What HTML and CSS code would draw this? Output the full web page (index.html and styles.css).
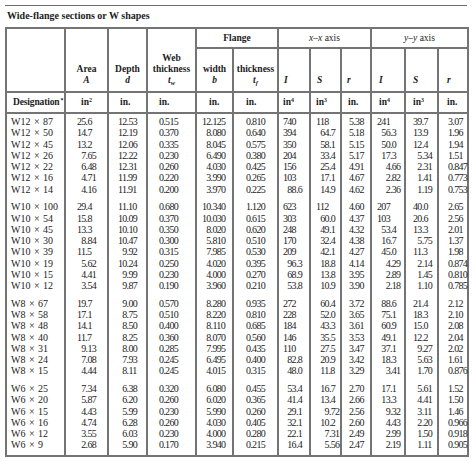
FILE: index.html
```html
<!DOCTYPE html>
<html lang="en">
<head>
<meta charset="utf-8">
<title>Wide-flange sections or W shapes</title>
<link rel="stylesheet" href="styles.css">
</head>
<body>
<div class="sheet">
  <div class="rule"></div>
  <h1 class="title">Wide-flange sections or W shapes</h1>
  <table class="shapes">
    <colgroup>
      <col class="w-des"><col class="w-area"><col class="w-depth"><col class="w-web">
      <col class="w-fw"><col class="w-ft"><col class="w-ix"><col class="w-sx">
      <col class="w-rx"><col class="w-iy"><col class="w-sy"><col class="w-ry">
    </colgroup>
    <thead>
      <tr class="h1">
        <th rowspan="2" class="lab"></th>
        <th rowspan="2" class="lab">Area<br><i>A</i></th>
        <th rowspan="2" class="lab">Depth<br><i>d</i></th>
        <th rowspan="2" class="lab">Web<br>thickness<br><i>t<sub>w</sub></i></th>
        <th colspan="2" class="grp">Flange</th>
        <th colspan="3" class="axis"><i>x</i>–<i>x</i> axis</th>
        <th colspan="3" class="axis"><i>y</i>–<i>y</i> axis</th>
      </tr>
      <tr class="h2">
        <th class="lab">width<br><i>b</i></th>
        <th class="lab">thickness<br><i>t<sub>f</sub></i></th>
        <th class="sym"><i>I</i></th>
        <th class="sym"><i>S</i></th>
        <th class="sym"><i>r</i></th>
        <th class="sym"><i>I</i></th>
        <th class="sym"><i>S</i></th>
        <th class="sym"><i>r</i></th>
      </tr>
      <tr class="h3">
        <th class="des">Designation<sup class="star">*</sup></th>
        <th>in<sup>2</sup></th>
        <th>in.</th>
        <th>in.</th>
        <th>in.</th>
        <th>in.</th>
        <th>in<sup>4</sup></th>
        <th>in<sup>3</sup></th>
        <th>in.</th>
        <th>in<sup>4</sup></th>
        <th>in<sup>3</sup></th>
        <th>in.</th>
      </tr>
    </thead>
    <tbody>
      <tr><td>W12 × 87</td><td>25.6</td><td>12.53</td><td>0.515</td><td>12.125</td><td>0.810</td><td>740</td><td>118</td><td>5.38</td><td>241</td><td>39.7</td><td>3.07</td></tr>
      <tr><td>W12 × 50</td><td>14.7</td><td>12.19</td><td>0.370</td><td class="s1">8.080</td><td>0.640</td><td>394</td><td class="s1">64.7</td><td>5.18</td><td class="s1">56.3</td><td>13.9</td><td>1.96</td></tr>
      <tr><td>W12 × 45</td><td>13.2</td><td>12.06</td><td>0.335</td><td class="s1">8.045</td><td>0.575</td><td>350</td><td class="s1">58.1</td><td>5.15</td><td class="s1">50.0</td><td>12.4</td><td>1.94</td></tr>
      <tr><td>W12 × 26</td><td class="s1">7.65</td><td>12.22</td><td>0.230</td><td class="s1">6.490</td><td>0.380</td><td>204</td><td class="s1">33.4</td><td>5.17</td><td class="s1">17.3</td><td class="s1">5.34</td><td>1.51</td></tr>
      <tr><td>W12 × 22</td><td class="s1">6.48</td><td>12.31</td><td>0.260</td><td class="s1">4.030</td><td>0.425</td><td>156</td><td class="s1">25.4</td><td>4.91</td><td class="s2">4.66</td><td class="s1">2.31</td><td>0.847</td></tr>
      <tr><td>W12 × 16</td><td class="s1">4.71</td><td>11.99</td><td>0.220</td><td class="s1">3.990</td><td>0.265</td><td>103</td><td class="s1">17.1</td><td>4.67</td><td class="s2">2.82</td><td class="s1">1.41</td><td>0.773</td></tr>
      <tr><td>W12 × 14</td><td class="s1">4.16</td><td>11.91</td><td>0.200</td><td class="s1">3.970</td><td>0.225</td><td class="s1">88.6</td><td class="s1">14.9</td><td>4.62</td><td class="s2">2.36</td><td class="s1">1.19</td><td>0.753</td></tr>
    </tbody>
    <tbody>
      <tr><td>W10 × 100</td><td>29.4</td><td>11.10</td><td>0.680</td><td>10.340</td><td>1.120</td><td>623</td><td>112</td><td>4.60</td><td>207</td><td>40.0</td><td>2.65</td></tr>
      <tr><td>W10 × 54</td><td>15.8</td><td>10.09</td><td>0.370</td><td>10.030</td><td>0.615</td><td>303</td><td class="s1">60.0</td><td>4.37</td><td>103</td><td>20.6</td><td>2.56</td></tr>
      <tr><td>W10 × 45</td><td>13.3</td><td>10.10</td><td>0.350</td><td class="s1">8.020</td><td>0.620</td><td>248</td><td class="s1">49.1</td><td>4.32</td><td class="s1">53.4</td><td>13.3</td><td>2.01</td></tr>
      <tr><td>W10 × 30</td><td class="s1">8.84</td><td>10.47</td><td>0.300</td><td class="s1">5.810</td><td>0.510</td><td>170</td><td class="s1">32.4</td><td>4.38</td><td class="s1">16.7</td><td class="s1">5.75</td><td>1.37</td></tr>
      <tr><td>W10 × 39</td><td>11.5</td><td class="s1">9.92</td><td>0.315</td><td class="s1">7.985</td><td>0.530</td><td>209</td><td class="s1">42.1</td><td>4.27</td><td class="s1">45.0</td><td>11.3</td><td>1.98</td></tr>
      <tr><td>W10 × 19</td><td class="s1">5.62</td><td>10.24</td><td>0.250</td><td class="s1">4.020</td><td>0.395</td><td class="s1">96.3</td><td class="s1">18.8</td><td>4.14</td><td class="s2">4.29</td><td class="s1">2.14</td><td>0.874</td></tr>
      <tr><td>W10 × 15</td><td class="s1">4.41</td><td class="s1">9.99</td><td>0.230</td><td class="s1">4.000</td><td>0.270</td><td class="s1">68.9</td><td class="s1">13.8</td><td>3.95</td><td class="s2">2.89</td><td class="s1">1.45</td><td>0.810</td></tr>
      <tr><td>W10 × 12</td><td class="s1">3.54</td><td class="s1">9.87</td><td>0.190</td><td class="s1">3.960</td><td>0.210</td><td class="s1">53.8</td><td class="s1">10.9</td><td>3.90</td><td class="s2">2.18</td><td class="s1">1.10</td><td>0.785</td></tr>
    </tbody>
    <tbody>
      <tr><td>W8 × 67</td><td>19.7</td><td class="s1">9.00</td><td>0.570</td><td class="s1">8.280</td><td>0.935</td><td>272</td><td class="s1">60.4</td><td>3.72</td><td class="s1">88.6</td><td>21.4</td><td>2.12</td></tr>
      <tr><td>W8 × 58</td><td>17.1</td><td class="s1">8.75</td><td>0.510</td><td class="s1">8.220</td><td>0.810</td><td>228</td><td class="s1">52.0</td><td>3.65</td><td class="s1">75.1</td><td>18.3</td><td>2.10</td></tr>
      <tr><td>W8 × 48</td><td>14.1</td><td class="s1">8.50</td><td>0.400</td><td class="s1">8.110</td><td>0.685</td><td>184</td><td class="s1">43.3</td><td>3.61</td><td class="s1">60.9</td><td>15.0</td><td>2.08</td></tr>
      <tr><td>W8 × 40</td><td>11.7</td><td class="s1">8.25</td><td>0.360</td><td class="s1">8.070</td><td>0.560</td><td>146</td><td class="s1">35.5</td><td>3.53</td><td class="s1">49.1</td><td>12.2</td><td>2.04</td></tr>
      <tr><td>W8 × 31</td><td class="s1">9.13</td><td class="s1">8.00</td><td>0.285</td><td class="s1">7.995</td><td>0.435</td><td>110</td><td class="s1">27.5</td><td>3.47</td><td class="s1">37.1</td><td class="s1">9.27</td><td>2.02</td></tr>
      <tr><td>W8 × 24</td><td class="s1">7.08</td><td class="s1">7.93</td><td>0.245</td><td class="s1">6.495</td><td>0.400</td><td class="s1">82.8</td><td class="s1">20.9</td><td>3.42</td><td class="s1">18.3</td><td class="s1">5.63</td><td>1.61</td></tr>
      <tr><td>W8 × 15</td><td class="s1">4.44</td><td class="s1">8.11</td><td>0.245</td><td class="s1">4.015</td><td>0.315</td><td class="s1">48.0</td><td class="s1">11.8</td><td>3.29</td><td class="s2">3.41</td><td class="s1">1.70</td><td>0.876</td></tr>
    </tbody>
    <tbody>
      <tr><td>W6 × 25</td><td class="s1">7.34</td><td class="s1">6.38</td><td>0.320</td><td class="s1">6.080</td><td>0.455</td><td class="s1">53.4</td><td class="s1">16.7</td><td>2.70</td><td class="s1">17.1</td><td class="s1">5.61</td><td>1.52</td></tr>
      <tr><td>W6 × 20</td><td class="s1">5.87</td><td class="s1">6.20</td><td>0.260</td><td class="s1">6.020</td><td>0.365</td><td class="s1">41.4</td><td class="s1">13.4</td><td>2.66</td><td class="s1">13.3</td><td class="s1">4.41</td><td>1.50</td></tr>
      <tr><td>W6 × 15</td><td class="s1">4.43</td><td class="s1">5.99</td><td>0.230</td><td class="s1">5.990</td><td>0.260</td><td class="s1">29.1</td><td class="s2">9.72</td><td>2.56</td><td class="s2">9.32</td><td class="s1">3.11</td><td>1.46</td></tr>
      <tr><td>W6 × 16</td><td class="s1">4.74</td><td class="s1">6.28</td><td>0.260</td><td class="s1">4.030</td><td>0.405</td><td class="s1">32.1</td><td class="s1">10.2</td><td>2.60</td><td class="s2">4.43</td><td class="s1">2.20</td><td>0.966</td></tr>
      <tr><td>W6 × 12</td><td class="s1">3.55</td><td class="s1">6.03</td><td>0.230</td><td class="s1">4.000</td><td>0.280</td><td class="s1">22.1</td><td class="s2">7.31</td><td>2.49</td><td class="s2">2.99</td><td class="s1">1.50</td><td>0.918</td></tr>
      <tr><td>W6 × 9</td><td class="s1">2.68</td><td class="s1">5.90</td><td>0.170</td><td class="s1">3.940</td><td>0.215</td><td class="s1">16.4</td><td class="s2">5.56</td><td>2.47</td><td class="s2">2.19</td><td class="s1">1.11</td><td>0.905</td></tr>
    </tbody>
  </table>
</div>
</body>
</html>
```

FILE: styles.css
```css
* {
  box-sizing: border-box;
}

body {
  margin: 0;
  background: #ffffff;
  color: #1c1c1c;
  font-family: "Liberation Serif", "Times New Roman", serif;
}

.sheet {
  width: 474px;
  padding: 5px 7px 0 5px;
}

.rule {
  border-top: 1px solid #6f6f6f;
}

.title {
  margin: 3px 0 5px 2px;
  font-size: 10px;
  line-height: 13px;
  font-weight: bold;
}

.shapes {
  width: 462px;
  border-collapse: collapse;
  table-layout: fixed;
  font-size: 10px;
  border: 2px solid #747474;
}

.w-des { width: 59px; }
.w-area { width: 43px; }
.w-depth { width: 39px; }
.w-web { width: 49px; }
.w-fw { width: 37px; }
.w-ft { width: 45px; }
.w-ix { width: 32px; }
.w-sx { width: 31px; }
.w-rx { width: 30px; }
.w-iy { width: 34px; }
.w-sy { width: 33px; }
.w-ry { width: 30px; }

.shapes th,
.shapes td {
  padding: 0;
  border-left: 2px solid #747474;
  border-right: 2px solid #747474;
  white-space: nowrap;
}

.shapes th {
  font-size: 9.5px;
  font-weight: bold;
  line-height: 11px;
  border-bottom: 2px solid #747474;
}

.shapes th i {
  font-style: italic;
  font-weight: bold;
}

.shapes sup {
  font-size: 0.62em;
  line-height: 0;
  vertical-align: 0.5em;
}

.shapes sub {
  font-size: 0.68em;
  line-height: 0;
  vertical-align: -0.3em;
}

.star {
  margin-left: 1px;
}

.h1 {
  height: 20px;
}

.h2 {
  height: 44px;
}

.h3 {
  height: 21px;
}

.lab {
  text-align: center;
  vertical-align: bottom;
}

.shapes .lab {
  padding-bottom: 5px;
}

.grp {
  text-align: center;
  vertical-align: middle;
}

.shapes .axis {
  text-align: center;
  vertical-align: middle;
  font-weight: normal;
}

.shapes .axis i {
  font-weight: normal;
}

.shapes .sym {
  text-align: left;
  vertical-align: bottom;
  padding-bottom: 5px;
}

.h2 .sym:nth-child(3) { padding-left: 5px; }
.h2 .sym:nth-child(4) { padding-left: 6px; }
.h2 .sym:nth-child(5) { padding-left: 5px; }
.h2 .sym:nth-child(6) { padding-left: 7px; }
.h2 .sym:nth-child(7) { padding-left: 7px; }
.h2 .sym:nth-child(8) { padding-left: 8px; }

.h3 th {
  text-align: left;
  vertical-align: middle;
}

.shapes .des {
  letter-spacing: -0.15px;
}

.h3 th:nth-child(1) { padding-left: 6px; }
.h3 th:nth-child(2) { padding-left: 15px; }
.h3 th:nth-child(3) { padding-left: 11px; }
.h3 th:nth-child(4) { padding-left: 11px; }
.h3 th:nth-child(5) { padding-left: 12px; }
.h3 th:nth-child(6) { padding-left: 12px; }
.h3 th:nth-child(7) { padding-left: 4px; }
.h3 th:nth-child(8) { padding-left: 5px; }
.h3 th:nth-child(9) { padding-left: 6px; }
.h3 th:nth-child(10) { padding-left: 7px; }
.h3 th:nth-child(11) { padding-left: 7px; }
.h3 th:nth-child(12) { padding-left: 8px; }

.shapes td {
  height: 11.25px;
  line-height: 11.25px;
  text-align: left;
  vertical-align: middle;
  letter-spacing: -0.7px;
}

.shapes td:nth-child(1) {
  padding-left: 4px;
  letter-spacing: 0;
  word-spacing: 1px;
}

.shapes td:nth-child(2) { padding-left: 11px; }
.shapes td:nth-child(3) { padding-left: 9px; }
.shapes td:nth-child(4) { padding-left: 11px; }
.shapes td:nth-child(5) { padding-left: 5px; }
.shapes td:nth-child(6) { padding-left: 12px; }
.shapes td:nth-child(7) { padding-left: 4px; }
.shapes td:nth-child(8) { padding-left: 5px; }
.shapes td:nth-child(9) { padding-left: 7px; }
.shapes td:nth-child(10) { padding-left: 5px; }
.shapes td:nth-child(11) { padding-left: 7px; }
.shapes td:nth-child(12) { padding-left: 9px; }

.shapes td.s1 { text-indent: 4.3px; }
.shapes td.s2 { text-indent: 8.6px; }

.shapes tbody tr:first-child td {
  height: 17.75px;
  padding-top: 6.5px;
}

.shapes tbody:first-of-type tr:first-child td {
  height: 13.25px;
  padding-top: 2px;
}

.shapes tbody:last-of-type tr:last-child td {
  height: 15.25px;
  padding-bottom: 4px;
}
```
